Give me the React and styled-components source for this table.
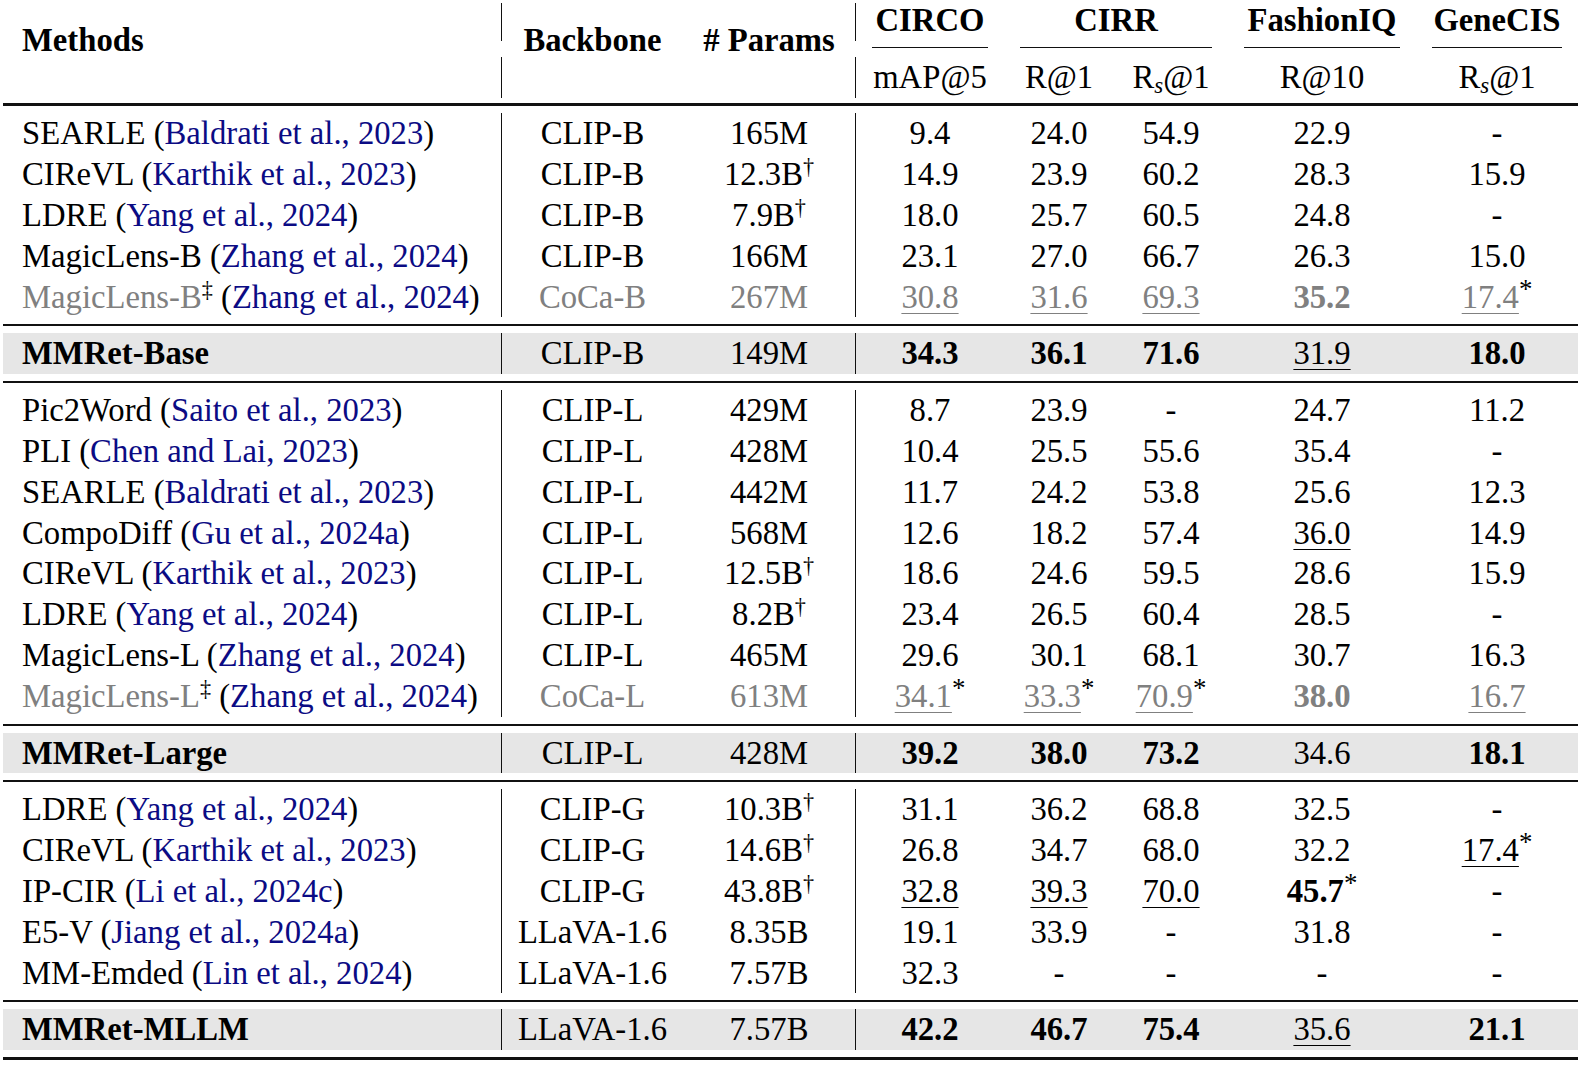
import React from 'react';
import styled, { createGlobalStyle } from 'styled-components';

const GlobalStyle = createGlobalStyle`
  html, body {
    margin: 0;
    padding: 0;
    background: #fff;
  }
  body {
    font-family: "Liberation Serif", "Times New Roman", serif;
    color: #000;
  }
`;

const COLS = '498px 1px 181px 172px 1px 148px 110px 114px 188px 162px';
const ROW_H = 40.8;

const Table = styled.div`
  width: 1575px;
  margin-left: 3px;
  font-size: 32.7px;
  line-height: ${ROW_H}px;
`;

const HeaderGrid = styled.div`
  display: grid;
  grid-template-columns: ${COLS};
  grid-template-rows: ${ROW_H}px 16.2px ${ROW_H}px;
  padding-bottom: 5.6px;
`;

const HeadCell = styled.div`
  grid-column: ${p => p.$col};
  grid-row: ${p => p.$row};
  text-align: ${p => p.$left ? 'left' : 'center'};
  padding-left: ${p => p.$left ? '19px' : '0'};
  padding-top: ${p => p.$drop ? '19.7px' : '0'};
  font-weight: ${p => p.$bold ? 700 : 400};
  white-space: nowrap;
`;

const HeadLine = styled.div`
  grid-column: ${p => p.$col};
  grid-row: ${p => p.$row};
  background: #111;
  margin-top: ${p => p.$top || 0}px;
`;

const CmidRule = styled.div`
  grid-column: ${p => p.$col};
  grid-row: 2;
  margin: 6px 16px 0;
  height: 1.3px;
  background: #111;
`;

const Rule = styled.div`
  height: ${p => p.$w}px;
  background: #111;
`;

const Block = styled.div`
  padding: 7px 0;
`;

const Row = styled.div`
  display: grid;
  grid-template-columns: ${COLS};
  height: ${ROW_H}px;
  background: ${p => p.$hl ? '#e6e6e6' : 'transparent'};
  color: ${p => p.$muted ? '#808080' : '#000'};
`;

const MethodCell = styled.div`
  padding-left: 19px;
  white-space: nowrap;
  font-weight: ${p => p.$bold ? 700 : 400};
`;

const Cell = styled.div`
  text-align: center;
  white-space: nowrap;
`;

const VSep = styled.div`
  background: #111;
`;

const Name = styled.span`
  color: ${p => p.$muted ? '#808080' : '#000'};
`;

const Paren = styled.span`
  color: #000;
`;

const Cite = styled.span`
  color: #0b0b84;
`;

const Sup = styled.sup`
  font-size: ${p => p.$star ? '0.82em' : '0.68em'};
  vertical-align: ${p => p.$star ? '0.36em' : '0.5em'};
  line-height: 0;
  color: #000;
  font-weight: 400;
`;

const Sub = styled.sub`
  font-size: 0.7em;
  font-style: italic;
  vertical-align: -0.22em;
  line-height: 0;
`;

const U = styled.span`
  text-decoration: underline;
  text-decoration-thickness: 1.4px;
  text-underline-offset: 5px;
`;

const B = styled.span`
  font-weight: 700;
`;

const blocks = [
  {
    rows: [
      { name: 'SEARLE', cite: 'Baldrati et al., 2023', bb: 'CLIP-B', params: '165M', vals: ['9.4', '24.0', '54.9', '22.9', '-'] },
      { name: 'CIReVL', cite: 'Karthik et al., 2023', bb: 'CLIP-B', params: '12.3B†', vals: ['14.9', '23.9', '60.2', '28.3', '15.9'] },
      { name: 'LDRE', cite: 'Yang et al., 2024', bb: 'CLIP-B', params: '7.9B†', vals: ['18.0', '25.7', '60.5', '24.8', '-'] },
      { name: 'MagicLens-B', cite: 'Zhang et al., 2024', bb: 'CLIP-B', params: '166M', vals: ['23.1', '27.0', '66.7', '26.3', '15.0'] },
      { name: 'MagicLens-B', mark: '‡', muted: true, cite: 'Zhang et al., 2024', bb: 'CoCa-B', params: '267M', vals: ['_30.8', '_31.6', '_69.3', '!35.2', '_17.4*'] },
    ],
    ours: { name: 'MMRet-Base', bb: 'CLIP-B', params: '149M', vals: ['!34.3', '!36.1', '!71.6', '_31.9', '!18.0'] },
  },
  {
    rows: [
      { name: 'Pic2Word', cite: 'Saito et al., 2023', bb: 'CLIP-L', params: '429M', vals: ['8.7', '23.9', '-', '24.7', '11.2'] },
      { name: 'PLI', cite: 'Chen and Lai, 2023', bb: 'CLIP-L', params: '428M', vals: ['10.4', '25.5', '55.6', '35.4', '-'] },
      { name: 'SEARLE', cite: 'Baldrati et al., 2023', bb: 'CLIP-L', params: '442M', vals: ['11.7', '24.2', '53.8', '25.6', '12.3'] },
      { name: 'CompoDiff', cite: 'Gu et al., 2024a', bb: 'CLIP-L', params: '568M', vals: ['12.6', '18.2', '57.4', '_36.0', '14.9'] },
      { name: 'CIReVL', cite: 'Karthik et al., 2023', bb: 'CLIP-L', params: '12.5B†', vals: ['18.6', '24.6', '59.5', '28.6', '15.9'] },
      { name: 'LDRE', cite: 'Yang et al., 2024', bb: 'CLIP-L', params: '8.2B†', vals: ['23.4', '26.5', '60.4', '28.5', '-'] },
      { name: 'MagicLens-L', cite: 'Zhang et al., 2024', bb: 'CLIP-L', params: '465M', vals: ['29.6', '30.1', '68.1', '30.7', '16.3'] },
      { name: 'MagicLens-L', mark: '‡', muted: true, cite: 'Zhang et al., 2024', bb: 'CoCa-L', params: '613M', vals: ['_34.1*', '_33.3*', '_70.9*', '!38.0', '_16.7'] },
    ],
    ours: { name: 'MMRet-Large', bb: 'CLIP-L', params: '428M', vals: ['!39.2', '!38.0', '!73.2', '34.6', '!18.1'] },
  },
  {
    rows: [
      { name: 'LDRE', cite: 'Yang et al., 2024', bb: 'CLIP-G', params: '10.3B†', vals: ['31.1', '36.2', '68.8', '32.5', '-'] },
      { name: 'CIReVL', cite: 'Karthik et al., 2023', bb: 'CLIP-G', params: '14.6B†', vals: ['26.8', '34.7', '68.0', '32.2', '_17.4*'] },
      { name: 'IP-CIR', cite: 'Li et al., 2024c', bb: 'CLIP-G', params: '43.8B†', vals: ['_32.8', '_39.3', '_70.0', '!45.7*', '-'] },
      { name: 'E5-V', cite: 'Jiang et al., 2024a', bb: 'LLaVA-1.6', params: '8.35B', vals: ['19.1', '33.9', '-', '31.8', '-'] },
      { name: 'MM-Emded', cite: 'Lin et al., 2024', bb: 'LLaVA-1.6', params: '7.57B', vals: ['32.3', '-', '-', '-', '-'] },
    ],
    ours: { name: 'MMRet-MLLM', bb: 'LLaVA-1.6', params: '7.57B', vals: ['!42.2', '!46.7', '!75.4', '_35.6', '!21.1'] },
  },
];

// "_" underline, "!" bold, trailing * or † goes up as superscript
function Val({ s }) {
  const m = s.match(/^([_!]?)(.*?)([*†]?)$/);
  const [, kind, text, sup] = m;
  let body = text;
  if (kind === '_') body = <U>{text}</U>;
  if (kind === '!') body = <B>{text}</B>;
  return (
    <>
      {body}
      {sup && <Sup $star={sup === '*'}>{sup}</Sup>}
    </>
  );
}

function DataRow({ row }) {
  return (
    <Row $muted={row.muted}>
      <MethodCell>
        <Name $muted={row.muted}>{row.name}</Name>
        {row.mark && <Sup>{row.mark}</Sup>}{' '}
        <Paren>(</Paren>
        <Cite>{row.cite}</Cite>
        <Paren>)</Paren>
      </MethodCell>
      <VSep />
      <Cell>{row.bb}</Cell>
      <Cell><Val s={row.params} /></Cell>
      <VSep />
      {row.vals.map((v, i) => (
        <Cell key={i}><Val s={v} /></Cell>
      ))}
    </Row>
  );
}

function OursRow({ row }) {
  return (
    <Row $hl>
      <MethodCell $bold>{row.name}</MethodCell>
      <VSep />
      <Cell>{row.bb}</Cell>
      <Cell>{row.params}</Cell>
      <VSep />
      {row.vals.map((v, i) => (
        <Cell key={i}><Val s={v} /></Cell>
      ))}
    </Row>
  );
}

function Header() {
  return (
    <HeaderGrid>
      <HeadCell $col="1" $row="1 / 4" $left $bold $drop>Methods</HeadCell>
      <HeadLine $col="2" $row="1" $top={3} />
      <HeadLine $col="2" $row="3" />
      <HeadCell $col="3" $row="1 / 4" $bold $drop>Backbone</HeadCell>
      <HeadCell $col="4" $row="1 / 4" $bold $drop># Params</HeadCell>
      <HeadLine $col="5" $row="1" $top={3} />
      <HeadLine $col="5" $row="3" />

      <HeadCell $col="6" $row="1" $bold>CIRCO</HeadCell>
      <HeadCell $col="7 / 9" $row="1" $bold>CIRR</HeadCell>
      <HeadCell $col="9" $row="1" $bold>FashionIQ</HeadCell>
      <HeadCell $col="10" $row="1" $bold>GeneCIS</HeadCell>

      <CmidRule $col="6" />
      <CmidRule $col="7 / 9" />
      <CmidRule $col="9" />
      <CmidRule $col="10" />

      <HeadCell $col="6" $row="3">mAP@5</HeadCell>
      <HeadCell $col="7" $row="3">R@1</HeadCell>
      <HeadCell $col="8" $row="3">R<Sub>s</Sub>@1</HeadCell>
      <HeadCell $col="9" $row="3">R@10</HeadCell>
      <HeadCell $col="10" $row="3">R<Sub>s</Sub>@1</HeadCell>
    </HeaderGrid>
  );
}

export default function App() {
  return (
    <>
      <GlobalStyle />
      <Table>
        <Header />
        <Rule $w={3} />
        {blocks.map((blk, bi) => (
          <React.Fragment key={bi}>
            <Block>
              {blk.rows.map((r, i) => (
                <DataRow key={i} row={r} />
              ))}
            </Block>
            <Rule $w={2} />
            <Block>
              <OursRow row={blk.ours} />
            </Block>
            <Rule $w={bi === blocks.length - 1 ? 3 : 2} />
          </React.Fragment>
        ))}
      </Table>
    </>
  );
}
